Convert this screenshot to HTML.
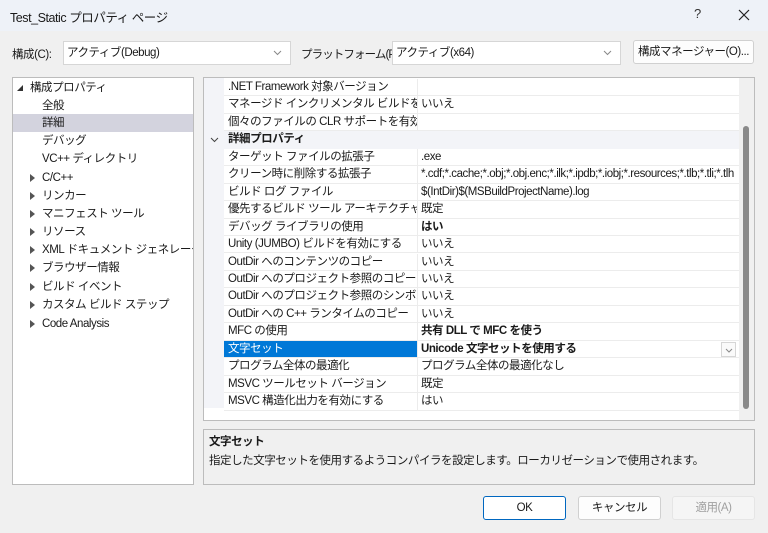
<!DOCTYPE html>
<html><head><meta charset="utf-8"><style>
*{margin:0;padding:0;box-sizing:border-box}
body{width:768px;height:533px;overflow:hidden;background:#f0f0f0;font-family:"Liberation Sans","Noto Sans CJK JP",sans-serif;font-size:11.5px;color:#1a1a1a;position:relative;letter-spacing:-0.45px}
.a{position:absolute;white-space:nowrap}
.title{left:0;top:0;width:768px;height:31px;background:#eef2f8}
.combo{background:#fff;border:1px solid #d6d6d6;height:24px;line-height:22px;padding-left:3px}
.btn{background:#fdfdfd;border:1px solid #d0d0d0;border-radius:3px;text-align:center;height:24px;line-height:22px}
.tree{left:12px;top:77px;width:182px;height:408px;background:#fff;border:1px solid #bcbcbc;overflow:hidden}
.ti{position:absolute;left:0;width:180px;height:18px;line-height:18px;white-space:nowrap}
.grid{left:203px;top:77px;width:552px;height:344px;background:#fff;border:1px solid #bcbcbc;overflow:hidden}
.row{position:absolute;left:0;width:535px;height:17.45px;line-height:17px;white-space:nowrap}
.row .n{position:absolute;left:20px;width:193px;padding-left:4px;border-bottom:1px solid #ececec;height:17.45px;overflow:hidden}
.row .v{position:absolute;left:213px;width:322px;padding-left:3px;border-bottom:1px solid #ececec;height:17.45px;border-left:1px solid #ececec;overflow:hidden}
.gut{position:absolute;left:0;top:0;width:20px;height:330px;background:#f3f4f8}
.tri{display:inline-block;width:0;height:0;border-top:4px solid transparent;border-bottom:4px solid transparent;border-left:5px solid #555;vertical-align:middle;margin-right:7px}
.chev{position:absolute;right:8px;top:8px}
</style></head><body>
<div class="a title"></div>
<div class="a" style="left:10px;top:7px;font-size:12.5px">Test_Static プロパティ ページ</div>
<div class="a" style="left:694px;top:6px;font-size:13px;color:#333">?</div>
<svg class="a" style="left:738px;top:9px" width="12" height="12"><path d="M1 1L11 11M11 1L1 11" stroke="#222" stroke-width="1.2"/></svg>

<div class="a" style="left:12px;top:46px">構成(C):</div>
<div class="a combo" style="left:63px;top:41px;width:228px">アクティブ(Debug)<svg class="chev" width="9" height="6"><path d="M1 1L4.5 4.5L8 1" stroke="#888" fill="none"/></svg></div>
<div class="a" style="left:301px;top:46px;letter-spacing:-0.9px">プラットフォーム(P):</div>
<div class="a combo" style="left:392px;top:41px;width:229px">アクティブ(x64)<svg class="chev" width="9" height="6"><path d="M1 1L4.5 4.5L8 1" stroke="#888" fill="none"/></svg></div>
<div class="a btn" style="left:633px;top:40px;width:121px">構成マネージャー(O)...</div>

<div class="a tree">
<div class="ti" style="top:1px;padding-left:4px"><span style="display:inline-block;border-left:6px solid transparent;border-bottom:6px solid #333;margin-right:7px;vertical-align:middle"></span>構成プロパティ</div>
<div class="ti" style="top:19px;padding-left:29px">全般</div>
<div class="ti" style="top:36px;padding-left:29px;background:#d3d3de">詳細</div>
<div class="ti" style="top:54px;padding-left:29px">デバッグ</div>
<div class="ti" style="top:72px;padding-left:29px">VC++ ディレクトリ</div>
<div class="ti" style="top:91px;padding-left:17px"><span class="tri"></span>C/C++</div>
<div class="ti" style="top:109px;padding-left:17px"><span class="tri"></span>リンカー</div>
<div class="ti" style="top:127px;padding-left:17px"><span class="tri"></span>マニフェスト ツール</div>
<div class="ti" style="top:145px;padding-left:17px"><span class="tri"></span>リソース</div>
<div class="ti" style="top:163px;padding-left:17px"><span class="tri"></span>XML ドキュメント ジェネレーター</div>
<div class="ti" style="top:181px;padding-left:17px"><span class="tri"></span>ブラウザー情報</div>
<div class="ti" style="top:200px;padding-left:17px"><span class="tri"></span>ビルド イベント</div>
<div class="ti" style="top:218px;padding-left:17px"><span class="tri"></span>カスタム ビルド ステップ</div>
<div class="ti" style="top:237px;padding-left:17px"><span class="tri"></span>Code Analysis</div>
</div>

<div class="a grid">
<div class="gut"></div>
<div class="row" style="top:1px"><div class="n">.NET Framework 対象バージョン</div><div class="v"></div></div>
<div class="row" style="top:18.45px"><div class="n">マネージド インクリメンタル ビルドを有効に</div><div class="v">いいえ</div></div>
<div class="row" style="top:35.9px"><div class="n">個々のファイルの CLR サポートを有効にす</div><div class="v"></div></div>
<div class="row" style="top:53.35px;background:#f3f4f8;font-weight:bold"><svg style="position:absolute;left:6px;top:6px" width="9" height="6"><path d="M1 1L4.5 4.5L8 1" stroke="#444" fill="none"/></svg><span style="position:absolute;left:24px">詳細プロパティ</span></div>
<div class="row" style="top:70.8px"><div class="n">ターゲット ファイルの拡張子</div><div class="v">.exe</div></div>
<div class="row" style="top:88.25px"><div class="n">クリーン時に削除する拡張子</div><div class="v">*.cdf;*.cache;*.obj;*.obj.enc;*.ilk;*.ipdb;*.iobj;*.resources;*.tlb;*.tli;*.tlh</div></div>
<div class="row" style="top:105.7px"><div class="n">ビルド ログ ファイル</div><div class="v">$(IntDir)$(MSBuildProjectName).log</div></div>
<div class="row" style="top:123.15px"><div class="n">優先するビルド ツール アーキテクチャ</div><div class="v">既定</div></div>
<div class="row" style="top:140.6px"><div class="n">デバッグ ライブラリの使用</div><div class="v"><b>はい</b></div></div>
<div class="row" style="top:158.05px"><div class="n">Unity (JUMBO) ビルドを有効にする</div><div class="v">いいえ</div></div>
<div class="row" style="top:175.5px"><div class="n">OutDir へのコンテンツのコピー</div><div class="v">いいえ</div></div>
<div class="row" style="top:192.95px"><div class="n">OutDir へのプロジェクト参照のコピー</div><div class="v">いいえ</div></div>
<div class="row" style="top:210.4px"><div class="n">OutDir へのプロジェクト参照のシンボルの</div><div class="v">いいえ</div></div>
<div class="row" style="top:227.85px"><div class="n">OutDir への C++ ランタイムのコピー</div><div class="v">いいえ</div></div>
<div class="row" style="top:245.3px"><div class="n">MFC の使用</div><div class="v"><b>共有 DLL で MFC を使う</b></div></div>
<div class="row" style="top:262.75px"><div class="n" style="background:#0078d7;color:#fff">文字セット</div><div class="v"><b>Unicode 文字セットを使用する</b><span style="position:absolute;right:3px;top:1px;width:15px;height:15px;border:1px solid #d6d6d6;background:#fafafa"><svg style="position:absolute;left:3px;top:5px" width="8" height="5"><path d="M1 1L4 4L7 1" stroke="#888" fill="none"/></svg></span></div></div>
<div class="row" style="top:280.2px"><div class="n">プログラム全体の最適化</div><div class="v">プログラム全体の最適化なし</div></div>
<div class="row" style="top:297.65px"><div class="n">MSVC ツールセット バージョン</div><div class="v">既定</div></div>
<div class="row" style="top:315.1px"><div class="n">MSVC 構造化出力を有効にする</div><div class="v">はい</div></div>
<div style="position:absolute;left:535px;top:0;width:16px;height:344px;background:#f0f0f0"></div>
<div style="position:absolute;left:539px;top:48px;width:6px;height:283px;background:#8a8a8a;border-radius:3px"></div>
</div>

<div class="a" style="left:203px;top:429px;width:552px;height:56px;border:1px solid #bcbcbc;background:#f0f0f0"></div>
<div class="a" style="left:209px;top:433px;font-weight:bold">文字セット</div>
<div class="a" style="left:209px;top:452px">指定した文字セットを使用するようコンパイラを設定します。ローカリゼーションで使用されます。</div>

<div class="a btn" style="left:483px;top:496px;width:83px;border:1px solid #0067c0;background:#fff">OK</div>
<div class="a btn" style="left:578px;top:496px;width:83px">キャンセル</div>
<div class="a btn" style="left:672px;top:496px;width:83px;background:#f5f5f5;border-color:#e5e5e5;color:#a0a0a0">適用(A)</div>
</body></html>
